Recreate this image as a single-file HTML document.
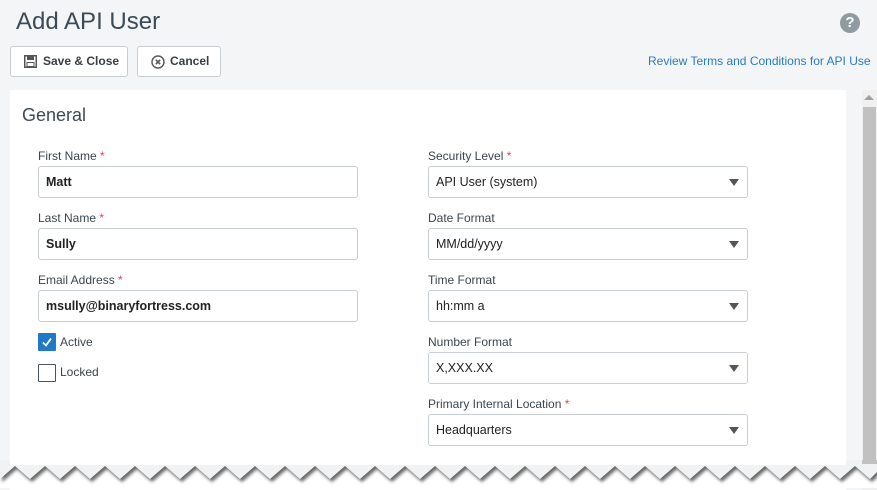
<!DOCTYPE html>
<html><head><meta charset="utf-8"><style>
*{box-sizing:border-box;margin:0;padding:0}
body{width:877px;height:488px;overflow:hidden;background:#f4f5f7;font-family:"Liberation Sans",sans-serif;position:relative;color:#333}
.title{position:absolute;left:16px;top:8px;font-size:24px;color:#3b4a56}
.help{position:absolute;left:840px;top:13px;width:20px;height:20px;border-radius:50%;background:#8f9aa1;color:#fff;font-weight:bold;font-size:15px;text-align:center;line-height:20px}
.btn{position:absolute;top:46px;height:31px;border:1px solid #c9ccd0;border-radius:3px;background:#fff;font-size:12px;font-weight:bold;color:#3a3f44;line-height:29px}
.link{position:absolute;left:648px;top:54px;font-size:12px;color:#2a7bc0}
.panel{position:absolute;left:10px;top:90px;width:836px;height:400px;background:#fff}
.sb{position:absolute;left:862px;top:90px;width:15px;height:400px;background:#f0f0f0}
.thumb{position:absolute;left:863px;top:107px;width:13px;height:380px;background:#c1c1c1}
h2{position:absolute;left:22px;top:105px;font-size:18px;font-weight:normal;color:#3b4a56}
.lbl{position:absolute;font-size:12px;color:#3a4550}
.lbl b{color:#e0445a;font-weight:normal}
.inp{position:absolute;width:320px;height:32px;border:1px solid #c9ced3;border-radius:3px;font-size:12.5px;color:#222;padding-left:7px;line-height:30px}
.inp.s:after{content:"";position:absolute;right:8px;top:12px;border-left:5px solid transparent;border-right:5px solid transparent;border-top:7px solid #555}
.cb{position:absolute;left:38px;width:18px;height:18px;border:1px solid #4a5560;border-radius:1px}
</style></head><body>
<div class="title">Add API User</div>
<div class="help">?</div>
<div class="btn" style="left:10px;width:118px;padding-left:32px">
<svg style="position:absolute;left:13px;top:8px" width="13" height="13" viewBox="0 0 13 13"><rect x="0.75" y="0.75" width="11.5" height="11.5" fill="none" stroke="#555" stroke-width="1.5"/><rect x="3" y="1" width="7" height="4" fill="#555"/><rect x="3" y="7.5" width="7" height="4" fill="none" stroke="#555"/></svg>Save &amp; Close</div>
<div class="btn" style="left:137px;width:84px;padding-left:32px">
<svg style="position:absolute;left:13px;top:8px" width="14" height="14" viewBox="0 0 14 14"><circle cx="7" cy="7" r="6" fill="none" stroke="#555" stroke-width="1.4"/><path d="M4.8 4.8L9.2 9.2M9.2 4.8L4.8 9.2" stroke="#555" stroke-width="1.5"/></svg>Cancel</div>
<div class="link">Review Terms and Conditions for API Use</div>
<div class="panel"></div>
<div class="sb"></div><div class="thumb"></div>
<div style="position:absolute;left:864px;top:95px;border-left:5px solid transparent;border-right:5px solid transparent;border-bottom:5px solid #a0a0a0"></div>
<h2>General</h2>
<div class="lbl" style="left:38px;top:149px">First Name <b>*</b></div>
<div class="inp" style="left:38px;top:166px;font-weight:bold">Matt</div>
<div class="lbl" style="left:38px;top:211px">Last Name <b>*</b></div>
<div class="inp" style="left:38px;top:228px;font-weight:bold">Sully</div>
<div class="lbl" style="left:38px;top:273px">Email Address <b>*</b></div>
<div class="inp" style="left:38px;top:290px;font-weight:bold">msully@binaryfortress.com</div>
<div class="cb" style="top:333px;background:#1f78c8;border-color:#1f78c8"><svg width="16" height="16" viewBox="0 0 16 16"><path d="M4 8.5L7 11.5L12 4.5" stroke="#fff" stroke-width="1.8" fill="none"/></svg></div>
<div class="lbl" style="left:60px;top:335px">Active</div>
<div class="cb" style="top:364px"></div>
<div class="lbl" style="left:60px;top:365px">Locked</div>
<div class="lbl" style="left:428px;top:149px">Security Level <b>*</b></div>
<div class="inp s" style="left:428px;top:166px">API User (system)</div>
<div class="lbl" style="left:428px;top:211px">Date Format</div>
<div class="inp s" style="left:428px;top:228px">MM/dd/yyyy</div>
<div class="lbl" style="left:428px;top:273px">Time Format</div>
<div class="inp s" style="left:428px;top:290px">hh:mm a</div>
<div class="lbl" style="left:428px;top:335px">Number Format</div>
<div class="inp s" style="left:428px;top:352px">X,XXX.XX</div>
<div class="lbl" style="left:428px;top:397px">Primary Internal Location <b>*</b></div>
<div class="inp s" style="left:428px;top:414px">Headquarters</div>
<svg style="position:absolute;left:0;top:460px" width="877" height="28" viewBox="0 0 877 28">
<defs><filter id="b" x="-5%" y="-50%" width="110%" height="200%"><feGaussianBlur stdDeviation="1.6"/></filter></defs>
<rect x="0" y="0" width="877" height="28" fill="#fff"/>
<path d="M0 0 H877 V12 L870 19 L855 6 L840 19 L825 6 L810 19 L795 6 L780 19 L765 6 L750 19 L735 6 L720 19 L705 6 L690 19 L675 6 L660 19 L645 6 L630 19 L615 6 L600 19 L585 6 L570 19 L555 6 L540 19 L525 6 L510 19 L495 6 L480 19 L465 6 L450 19 L435 6 L420 19 L405 6 L390 19 L375 6 L360 19 L345 6 L330 19 L315 6 L300 19 L285 6 L270 19 L255 6 L240 19 L225 6 L210 19 L195 6 L180 19 L165 6 L150 19 L135 6 L120 19 L105 6 L90 19 L75 6 L60 19 L45 6 L30 19 L15 6 L0 19Z" fill="#666" filter="url(#b)" transform="translate(2,3)"/>
<path d="M0 0 H877 V12 L870 19 L855 6 L840 19 L825 6 L810 19 L795 6 L780 19 L765 6 L750 19 L735 6 L720 19 L705 6 L690 19 L675 6 L660 19 L645 6 L630 19 L615 6 L600 19 L585 6 L570 19 L555 6 L540 19 L525 6 L510 19 L495 6 L480 19 L465 6 L450 19 L435 6 L420 19 L405 6 L390 19 L375 6 L360 19 L345 6 L330 19 L315 6 L300 19 L285 6 L270 19 L255 6 L240 19 L225 6 L210 19 L195 6 L180 19 L165 6 L150 19 L135 6 L120 19 L105 6 L90 19 L75 6 L60 19 L45 6 L30 19 L15 6 L0 19Z" fill="#f1f2f4"/>
<rect x="10" y="0" width="836" height="5" fill="#fff"/>
<rect x="862" y="0" width="15" height="4" fill="#c1c1c1"/>
</svg>
</body></html>
